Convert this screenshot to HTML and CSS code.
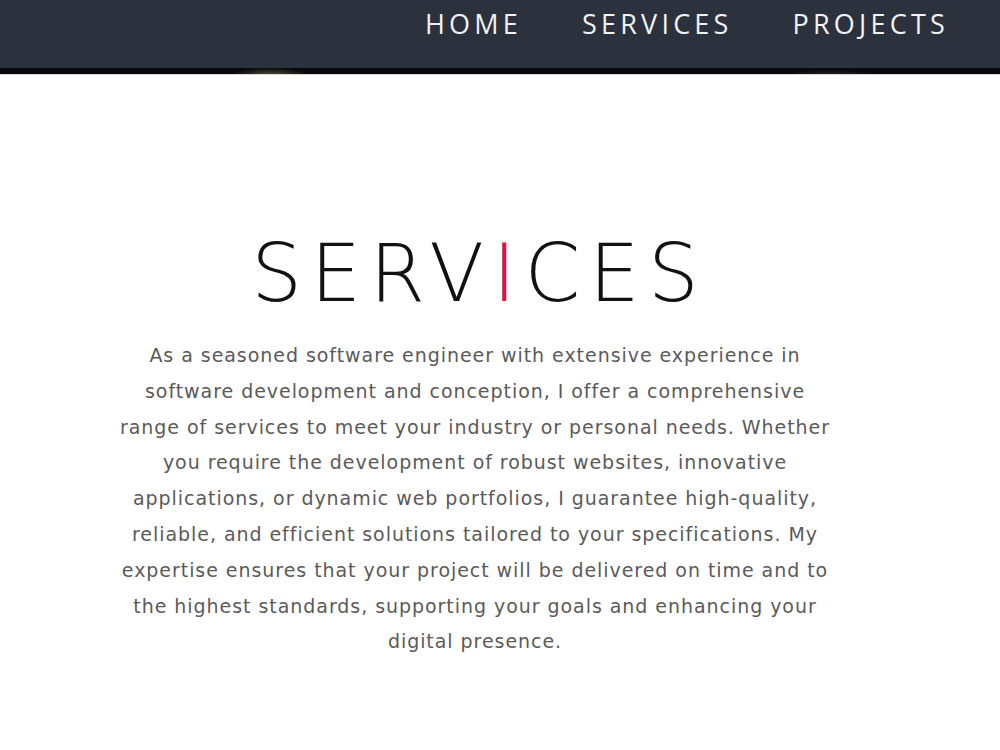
FILE: index.html
```html
<!DOCTYPE html>
<html lang="en">
<head>
<meta charset="utf-8">
<title>Services</title>
<link rel="stylesheet" href="styles.css">
</head>
<body>
<header class="topbar">
  <nav class="nav">
    <a class="nav-link" href="#">HOME</a>
    <a class="nav-link" href="#">SERVICES</a>
    <a class="nav-link" href="#">PROJECTS</a>
  </nav>
</header>
<div class="hero-strip"></div>
<main class="services">
  <h1 class="title">SERV<span class="accent">I</span>CES</h1>
  <p class="intro">As a seasoned software engineer with extensive experience in<br>software development and conception, I offer a comprehensive<br>range of services to meet your industry or personal needs. Whether<br>you require the development of robust websites, innovative<br>applications, or dynamic web portfolios, I guarantee high-quality,<br>reliable, and efficient solutions tailored to your specifications. My<br>expertise ensures that your project will be delivered on time and to<br>the highest standards, supporting your goals and enhancing your<br>digital presence.</p>
</main>
</body>
</html>
```

FILE: styles.css
```css
* { box-sizing: border-box; }
html, body { margin: 0; padding: 0; background: #ffffff; }
body { font-family: "Open Sans", "DejaVu Sans", sans-serif; }

.topbar {
  height: 68px;
  background: #2b313d;
  display: flex;
  justify-content: flex-end;
  align-items: flex-start;
  padding-right: 51px;
}
.nav { display: flex; gap: 60px; padding-top: 6px; }
.nav-link {
  color: #f2f2f2;
  text-decoration: none;
  font-size: 27px;
  font-weight: 400;
  letter-spacing: 4.2px;
  line-height: 36px;
}

.hero-strip {
  height: 7px;
  background:
    radial-gradient(ellipse 40px 8px at 270px 8px, rgba(160,150,120,0.55), rgba(0,0,0,0)),
    radial-gradient(ellipse 50px 6px at 830px 8px, rgba(90,85,75,0.45), rgba(0,0,0,0)),
    #08090a;
  border-bottom: 1px solid #d8d8d8;
}

.services {
  padding: 149px 50px 0 0;
  text-align: center;
}
.title {
  margin: 0;
  font-family: "DejaVu Sans", sans-serif;
  font-size: 80px;
  font-weight: 200;
  letter-spacing: 8.5px;
  line-height: 100px;
  color: #111111;
  padding-left: 8.5px;
}
.accent { color: #e0143f; }
.intro {
  margin: 14px auto 0;
  font-family: "DejaVu Sans", sans-serif;
  font-size: 19px;
  line-height: 35.8px;
  color: #5a5a5a;
  letter-spacing: 0.95px;
}
```
